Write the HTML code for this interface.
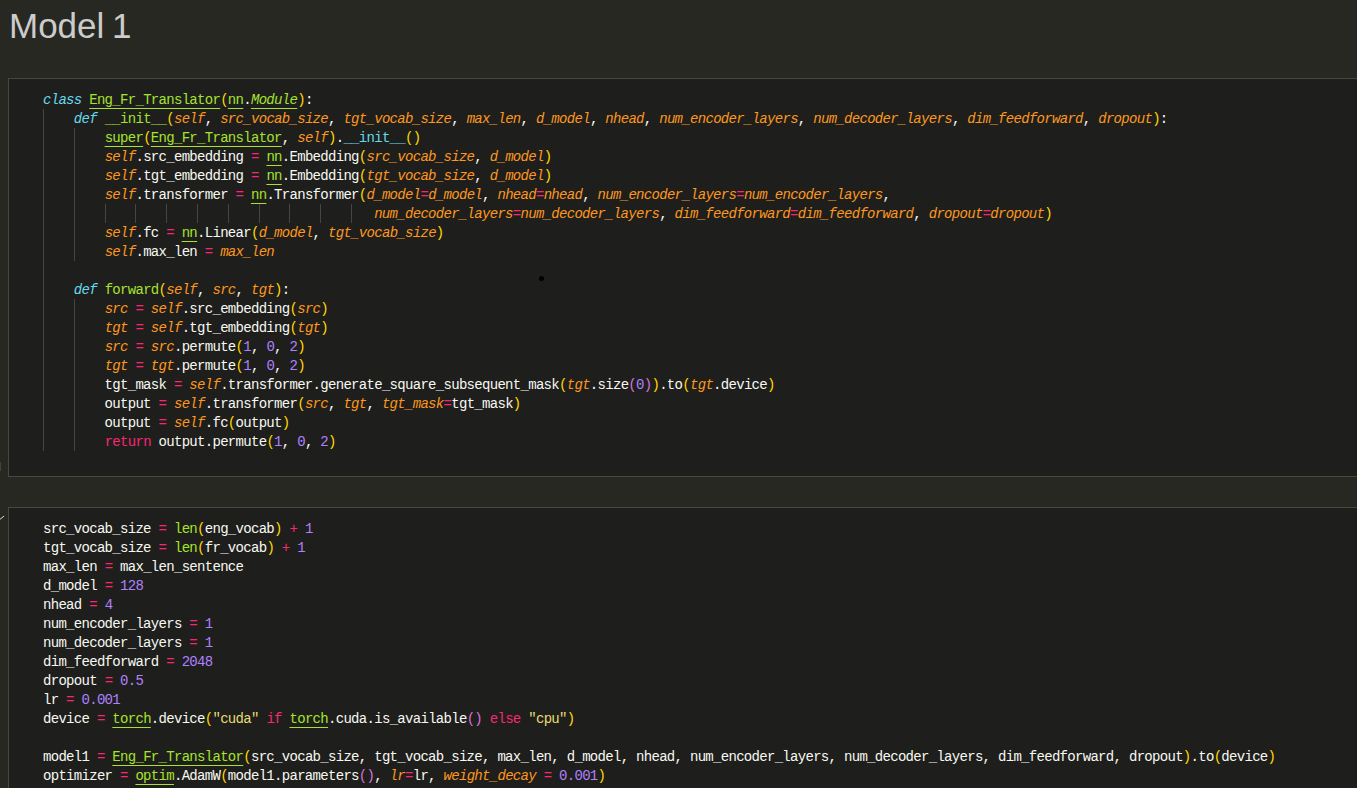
<!DOCTYPE html>
<html><head><meta charset="utf-8"><style>
html,body{margin:0;padding:0}
body{width:1357px;height:788px;overflow:hidden;background:#272822;position:relative}
h1{position:absolute;left:9px;top:8px;margin:0;letter-spacing:0px;font:normal 35px/1 "Liberation Sans",sans-serif;color:#cccccc}
.cell{position:absolute;left:8px;width:1400px;background:#1e1f1c;border:1px solid #48483e;box-sizing:border-box}
.code{position:absolute;left:43px;margin:0;font-family:"Liberation Mono",monospace;font-size:14px;letter-spacing:-0.7px;line-height:19px;color:#f8f8f2;white-space:pre}
.code div{height:19px}
b,i{font-weight:normal;font-style:normal}
i{font-style:italic}
.k{color:#66d9ef} .g{color:#a6e22e} .p{color:#fd971f} .o{color:#f92672} .n{color:#ae81ff} .s{color:#e6db74}
.y{color:#ffd700} .q{color:#da70d6} .m{color:#66d9ef}
.u{text-decoration:underline;text-decoration-color:#a6e22e;text-decoration-thickness:1px;text-underline-offset:4px}
.gd{position:absolute;width:1px;background:#46463f}
</style></head><body>
<h1>Model<span style="letter-spacing:-2px"> </span>1</h1>
<div class="cell" style="top:78px;height:399px"></div>
<div class="cell" style="top:507px;height:400px"></div>
<div style="position:absolute;left:0;top:462px;width:1px;height:9px;background:#44443e"></div>
<svg style="position:absolute;left:0;top:510px" width="8" height="14"><path d="M-1 10.1 L4.2 6" stroke="#d8d8d8" stroke-width="1" fill="none"/></svg>
<div class="gd" style="left:43px;top:109px;height:342px"></div><div class="gd" style="left:74px;top:128px;height:133px"></div><div class="gd" style="left:74px;top:299px;height:152px"></div><div class="gd" style="left:105px;top:204px;height:19px"></div><div class="gd" style="left:135px;top:204px;height:19px"></div><div class="gd" style="left:166px;top:204px;height:19px"></div><div class="gd" style="left:197px;top:204px;height:19px"></div><div class="gd" style="left:228px;top:204px;height:19px"></div><div class="gd" style="left:259px;top:204px;height:19px"></div><div class="gd" style="left:289px;top:204px;height:19px"></div><div class="gd" style="left:320px;top:204px;height:19px"></div><div class="gd" style="left:351px;top:204px;height:19px"></div>
<div class="code" style="top:91px"><div><i class="k">class</i> <b class="g u">Eng_Fr_Translator</b><b class="y">(</b><b class="g u">nn</b>.<i class="g u">Module</i><b class="y">)</b>:</div><div>    <i class="k">def</i> <b class="g">__init__</b><b class="y">(</b><i class="p">self</i>, <i class="p">src_vocab_size</i>, <i class="p">tgt_vocab_size</i>, <i class="p">max_len</i>, <i class="p">d_model</i>, <i class="p">nhead</i>, <i class="p">num_encoder_layers</i>, <i class="p">num_decoder_layers</i>, <i class="p">dim_feedforward</i>, <i class="p">dropout</i><b class="y">)</b>:</div><div>        <b class="g u">super</b><b class="y">(</b><b class="g u">Eng_Fr_Translator</b>, <i class="p">self</i><b class="y">)</b>.<b class="m">__init__</b><b class="y">()</b></div><div>        <i class="p">self</i>.src_embedding <b class="o">=</b> <b class="g u">nn</b>.Embedding<b class="y">(</b><i class="p">src_vocab_size</i>, <i class="p">d_model</i><b class="y">)</b></div><div>        <i class="p">self</i>.tgt_embedding <b class="o">=</b> <b class="g u">nn</b>.Embedding<b class="y">(</b><i class="p">tgt_vocab_size</i>, <i class="p">d_model</i><b class="y">)</b></div><div>        <i class="p">self</i>.transformer <b class="o">=</b> <b class="g u">nn</b>.Transformer<b class="y">(</b><i class="p">d_model</i><b class="o">=</b><i class="p">d_model</i>, <i class="p">nhead</i><b class="o">=</b><i class="p">nhead</i>, <i class="p">num_encoder_layers</i><b class="o">=</b><i class="p">num_encoder_layers</i>,</div><div>                                           <i class="p">num_decoder_layers</i><b class="o">=</b><i class="p">num_decoder_layers</i>, <i class="p">dim_feedforward</i><b class="o">=</b><i class="p">dim_feedforward</i>, <i class="p">dropout</i><b class="o">=</b><i class="p">dropout</i><b class="y">)</b></div><div>        <i class="p">self</i>.fc <b class="o">=</b> <b class="g u">nn</b>.Linear<b class="y">(</b><i class="p">d_model</i>, <i class="p">tgt_vocab_size</i><b class="y">)</b></div><div>        <i class="p">self</i>.max_len <b class="o">=</b> <i class="p">max_len</i></div><div></div><div>    <i class="k">def</i> <b class="g">forward</b><b class="y">(</b><i class="p">self</i>, <i class="p">src</i>, <i class="p">tgt</i><b class="y">)</b>:</div><div>        <i class="p">src</i> <b class="o">=</b> <i class="p">self</i>.src_embedding<b class="y">(</b><i class="p">src</i><b class="y">)</b></div><div>        <i class="p">tgt</i> <b class="o">=</b> <i class="p">self</i>.tgt_embedding<b class="y">(</b><i class="p">tgt</i><b class="y">)</b></div><div>        <i class="p">src</i> <b class="o">=</b> <i class="p">src</i>.permute<b class="y">(</b><b class="n">1</b>, <b class="n">0</b>, <b class="n">2</b><b class="y">)</b></div><div>        <i class="p">tgt</i> <b class="o">=</b> <i class="p">tgt</i>.permute<b class="y">(</b><b class="n">1</b>, <b class="n">0</b>, <b class="n">2</b><b class="y">)</b></div><div>        tgt_mask <b class="o">=</b> <i class="p">self</i>.transformer.generate_square_subsequent_mask<b class="y">(</b><i class="p">tgt</i>.size<b class="q">(</b><b class="n">0</b><b class="q">)</b><b class="y">)</b>.to<b class="y">(</b><i class="p">tgt</i>.device<b class="y">)</b></div><div>        output <b class="o">=</b> <i class="p">self</i>.transformer<b class="y">(</b><i class="p">src</i>, <i class="p">tgt</i>, <i class="p">tgt_mask</i><b class="o">=</b>tgt_mask<b class="y">)</b></div><div>        output <b class="o">=</b> <i class="p">self</i>.fc<b class="y">(</b>output<b class="y">)</b></div><div>        <b class="o">return</b> output.permute<b class="y">(</b><b class="n">1</b>, <b class="n">0</b>, <b class="n">2</b><b class="y">)</b></div></div>
<div class="code" style="top:520px"><div>src_vocab_size <b class="o">=</b> <b class="g">len</b><b class="y">(</b>eng_vocab<b class="y">)</b> <b class="o">+</b> <b class="n">1</b></div><div>tgt_vocab_size <b class="o">=</b> <b class="g">len</b><b class="y">(</b>fr_vocab<b class="y">)</b> <b class="o">+</b> <b class="n">1</b></div><div>max_len <b class="o">=</b> max_len_sentence</div><div>d_model <b class="o">=</b> <b class="n">128</b></div><div>nhead <b class="o">=</b> <b class="n">4</b></div><div>num_encoder_layers <b class="o">=</b> <b class="n">1</b></div><div>num_decoder_layers <b class="o">=</b> <b class="n">1</b></div><div>dim_feedforward <b class="o">=</b> <b class="n">2048</b></div><div>dropout <b class="o">=</b> <b class="n">0.5</b></div><div>lr <b class="o">=</b> <b class="n">0.001</b></div><div>device <b class="o">=</b> <b class="g u">torch</b>.device<b class="y">(</b><b class="s">"cuda"</b> <b class="o">if</b> <b class="g u">torch</b>.cuda.is_available<b class="q">()</b> <b class="o">else</b> <b class="s">"cpu"</b><b class="y">)</b></div><div></div><div>model1 <b class="o">=</b> <b class="g u">Eng_Fr_Translator</b><b class="y">(</b>src_vocab_size, tgt_vocab_size, max_len, d_model, nhead, num_encoder_layers, num_decoder_layers, dim_feedforward, dropout<b class="y">)</b>.to<b class="y">(</b>device<b class="y">)</b></div><div>optimizer <b class="o">=</b> <b class="g u">optim</b>.AdamW<b class="y">(</b>model1.parameters<b class="q">()</b>, <i class="p">lr</i><b class="o">=</b>lr, <i class="p">weight_decay</i> <b class="o">=</b> <b class="n">0.001</b><b class="y">)</b></div></div>
<div style="position:absolute;left:539px;top:276px;width:5px;height:5px;border-radius:2.5px;background:#000"></div>
</body></html>
